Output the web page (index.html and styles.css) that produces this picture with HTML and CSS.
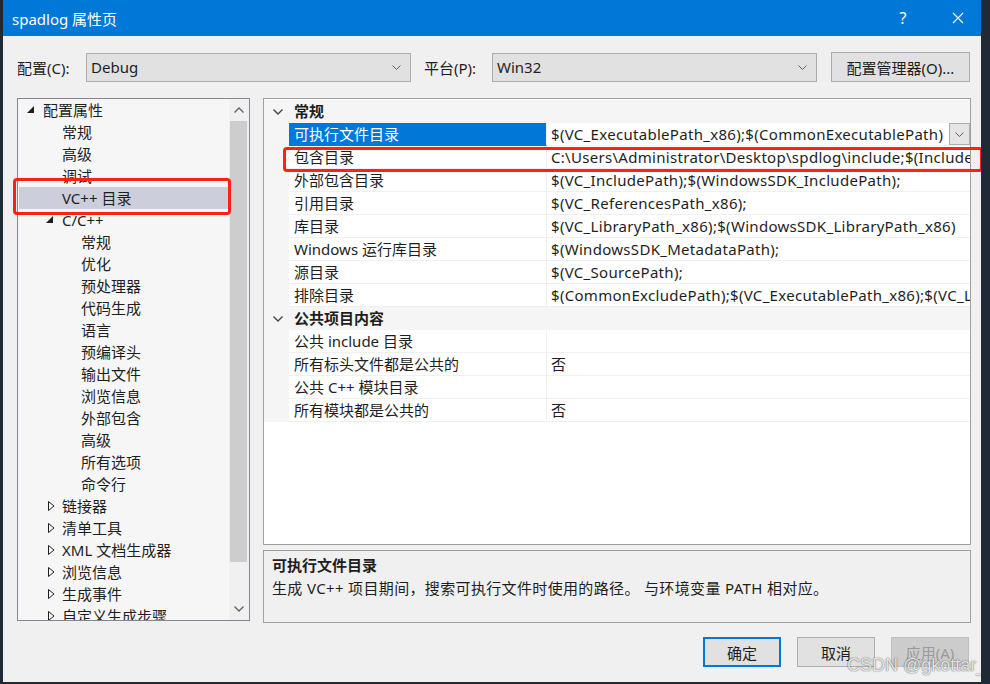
FILE: index.html
```html
<!DOCTYPE html>
<html lang="zh-CN">
<head>
    <meta charset="UTF-8">
    <title>spadlog 属性页</title>
    <link rel="stylesheet" href="styles.css">
</head>
<body>
    <div class="dialog">
        <div class="titlebar">
            <span class="title">spadlog 属性页</span>
            <span class="tb-help">?</span>
            <span class="tb-close">
                <svg width="12" height="12" viewBox="0 0 12 12"><path d="M1 1 L11 11 M11 1 L1 11" stroke="#fff" stroke-width="1.1" fill="none"/></svg>
            </span>
        </div>

        <div class="config-row">
            <span class="cfg-label">配置(C):</span>
            <div class="select">
                <span>Debug</span>
                <svg class="chev" width="9" height="5" viewBox="0 0 9 5"><path d="M0.5 0.5 L4.5 4.5 L8.5 0.5" stroke="#606060" fill="none"/></svg>
            </div>
            <span class="cfg-label plat">平台(P):</span>
            <div class="select">
                <span>Win32</span>
                <svg class="chev" width="9" height="5" viewBox="0 0 9 5"><path d="M0.5 0.5 L4.5 4.5 L8.5 0.5" stroke="#606060" fill="none"/></svg>
            </div>
            <button class="btn cfg-btn">配置管理器(O)...</button>
        </div>

        <div class="main">
            <div class="tree">
                <div class="tree-list">
                    <div class="node l0"><span class="exp"><svg width="8" height="8" viewBox="0 0 8 8"><path d="M7 0 L7 7 L0 7 Z" fill="#1e1e1e"/></svg></span>配置属性</div>
                    <div class="node l1"><span class="exp"></span>常规</div>
                    <div class="node l1"><span class="exp"></span>高级</div>
                    <div class="node l1"><span class="exp"></span>调试</div>
                    <div class="node l1 selected"><span class="exp"></span>VC++ 目录</div>
                    <div class="node l1"><span class="exp"><svg width="8" height="8" viewBox="0 0 8 8"><path d="M7 0 L7 7 L0 7 Z" fill="#1e1e1e"/></svg></span>C/C++</div>
                    <div class="node l2"><span class="exp"></span>常规</div>
                    <div class="node l2"><span class="exp"></span>优化</div>
                    <div class="node l2"><span class="exp"></span>预处理器</div>
                    <div class="node l2"><span class="exp"></span>代码生成</div>
                    <div class="node l2"><span class="exp"></span>语言</div>
                    <div class="node l2"><span class="exp"></span>预编译头</div>
                    <div class="node l2"><span class="exp"></span>输出文件</div>
                    <div class="node l2"><span class="exp"></span>浏览信息</div>
                    <div class="node l2"><span class="exp"></span>外部包含</div>
                    <div class="node l2"><span class="exp"></span>高级</div>
                    <div class="node l2"><span class="exp"></span>所有选项</div>
                    <div class="node l2"><span class="exp"></span>命令行</div>
                    <div class="node l1"><span class="exp"><svg class="closed" width="7" height="10" viewBox="0 0 7 10"><path d="M0.5 0.5 L6 5 L0.5 9.5 Z" fill="none" stroke="#1e1e1e"/></svg></span>链接器</div>
                    <div class="node l1"><span class="exp"><svg class="closed" width="7" height="10" viewBox="0 0 7 10"><path d="M0.5 0.5 L6 5 L0.5 9.5 Z" fill="none" stroke="#1e1e1e"/></svg></span>清单工具</div>
                    <div class="node l1"><span class="exp"><svg class="closed" width="7" height="10" viewBox="0 0 7 10"><path d="M0.5 0.5 L6 5 L0.5 9.5 Z" fill="none" stroke="#1e1e1e"/></svg></span>XML 文档生成器</div>
                    <div class="node l1"><span class="exp"><svg class="closed" width="7" height="10" viewBox="0 0 7 10"><path d="M0.5 0.5 L6 5 L0.5 9.5 Z" fill="none" stroke="#1e1e1e"/></svg></span>浏览信息</div>
                    <div class="node l1"><span class="exp"><svg class="closed" width="7" height="10" viewBox="0 0 7 10"><path d="M0.5 0.5 L6 5 L0.5 9.5 Z" fill="none" stroke="#1e1e1e"/></svg></span>生成事件</div>
                    <div class="node l1"><span class="exp"><svg class="closed" width="7" height="10" viewBox="0 0 7 10"><path d="M0.5 0.5 L6 5 L0.5 9.5 Z" fill="none" stroke="#1e1e1e"/></svg></span>自定义生成步骤</div>
                </div>
                <div class="scrollbar">
                    <div class="sb-arrow"><svg width="10" height="6" viewBox="0 0 10 6"><path d="M0.5 5.5 L5 1 L9.5 5.5" stroke="#606060" stroke-width="1.3" fill="none"/></svg></div>
                    <div class="sb-track"><div class="sb-thumb"></div></div>
                    <div class="sb-arrow"><svg width="10" height="6" viewBox="0 0 10 6"><path d="M0.5 0.5 L5 5 L9.5 0.5" stroke="#606060" stroke-width="1.3" fill="none"/></svg></div>
                </div>
            </div>

            <div class="right">
                <div class="grid">
                    <div class="cat"><span class="gut"><svg width="10" height="6" viewBox="0 0 10 6"><path d="M0.5 0.5 L5 5 L9.5 0.5" stroke="#444" stroke-width="1.4" fill="none"/></svg></span><span class="cat-name">常规</span></div>
                    <div class="prop active"><span class="gut"></span><span class="name">可执行文件目录</span><span class="val"><span class="val-text">$(VC_ExecutablePath_x86);$(CommonExecutablePath)</span><span class="val-btn"><svg width="9" height="5" viewBox="0 0 9 5"><path d="M0.5 0.5 L4.5 4.5 L8.5 0.5" stroke="#606060" fill="none"/></svg></span></span></div>
                    <div class="prop"><span class="gut"></span><span class="name">包含目录</span><span class="val"><span class="val-text">C:\Users\Administrator\Desktop\spdlog\include;$(IncludePath)</span></span></div>
                    <div class="prop"><span class="gut"></span><span class="name">外部包含目录</span><span class="val"><span class="val-text">$(VC_IncludePath);$(WindowsSDK_IncludePath);</span></span></div>
                    <div class="prop"><span class="gut"></span><span class="name">引用目录</span><span class="val"><span class="val-text">$(VC_ReferencesPath_x86);</span></span></div>
                    <div class="prop"><span class="gut"></span><span class="name">库目录</span><span class="val"><span class="val-text">$(VC_LibraryPath_x86);$(WindowsSDK_LibraryPath_x86)</span></span></div>
                    <div class="prop"><span class="gut"></span><span class="name">Windows 运行库目录</span><span class="val"><span class="val-text">$(WindowsSDK_MetadataPath);</span></span></div>
                    <div class="prop"><span class="gut"></span><span class="name">源目录</span><span class="val"><span class="val-text">$(VC_SourcePath);</span></span></div>
                    <div class="prop"><span class="gut"></span><span class="name">排除目录</span><span class="val"><span class="val-text">$(CommonExcludePath);$(VC_ExecutablePath_x86);$(VC_LibraryPath_x86)</span></span></div>
                    <div class="cat"><span class="gut"><svg width="10" height="6" viewBox="0 0 10 6"><path d="M0.5 0.5 L5 5 L9.5 0.5" stroke="#444" stroke-width="1.4" fill="none"/></svg></span><span class="cat-name">公共项目内容</span></div>
                    <div class="prop"><span class="gut"></span><span class="name">公共 include 目录</span><span class="val"><span class="val-text"></span></span></div>
                    <div class="prop"><span class="gut"></span><span class="name">所有标头文件都是公共的</span><span class="val"><span class="val-text">否</span></span></div>
                    <div class="prop"><span class="gut"></span><span class="name">公共 C++ 模块目录</span><span class="val"><span class="val-text"></span></span></div>
                    <div class="prop"><span class="gut"></span><span class="name">所有模块都是公共的</span><span class="val"><span class="val-text">否</span></span></div>
                </div>
                <div class="desc">
                    <div class="desc-title">可执行文件目录</div>
                    <div class="desc-text">生成 VC++ 项目期间，搜索可执行文件时使用的路径。 与环境变量 PATH 相对应。</div>
                </div>
            </div>
        </div>

        <div class="footer">
            <button class="btn default">确定</button>
            <button class="btn">取消</button>
            <button class="btn disabled">应用(A)</button>
        </div>

        <div class="mark mark-tree"></div>
        <div class="mark mark-grid"></div>
        <div class="watermark">CSDN @gkottar_</div>
    </div>
</body>
</html>
```

FILE: styles.css
```css
body {
    margin: 0;
    background-color: #1f2a36;
    font-family: "Noto Sans", "Noto Sans CJK SC", sans-serif;
    font-size: 15px;
    color: #1e1e1e;
}
.dialog {
    position: relative;
    width: 978px;
    height: 682px;
    margin-left: 3px;
    background-color: #f0f0f0;
    display: flex;
    flex-direction: column;
    overflow: hidden;
}
.titlebar {
    height: 36px;
    flex: none;
    background-color: #0078d7;
    color: #fff;
    display: flex;
    align-items: center;
    padding-left: 9px;
}
.title {
    font-size: 15px;
}
.tb-help {
    margin-left: auto;
    width: 30px;
    text-align: center;
    font-size: 16px;
    margin-right: 17px;
}
.tb-close {
    width: 46px;
    display: flex;
    justify-content: center;
}

.config-row {
    display: flex;
    align-items: center;
    height: 30px;
    margin-top: 16px;
    padding-left: 14px;
}
.cfg-label {
    width: 69px;
}
.cfg-label.plat {
    width: 68px;
    margin-left: 13px;
}
.select {
    width: 325px;
    height: 29px;
    box-sizing: border-box;
    border: 1px solid #adadad;
    background-color: #e1e1e1;
    display: flex;
    align-items: center;
    padding: 0 9px 0 4px;
}
.select .chev {
    margin-left: auto;
}
.btn {
    font-family: "Noto Sans", "Noto Sans CJK SC", sans-serif;
    font-size: 15px;
    color: #1e1e1e;
    background-color: #e1e1e1;
    border: 1px solid #adadad;
    height: 30px;
    width: 78px;
    padding: 0;
    box-sizing: border-box;
}
.cfg-btn {
    width: 139px;
    margin-left: 14px;
}

.main {
    display: flex;
    margin-top: 16px;
    padding-left: 14px;
    height: 525px;
}
.tree {
    width: 233px;
    height: 523px;
    box-sizing: border-box;
    border: 1px solid #828790;
    background-color: #f6f6f6;
    display: flex;
}
.tree-list {
    flex: 1;
    overflow: hidden;
}
.node {
    height: 22px;
    line-height: 22px;
    display: flex;
    align-items: center;
    margin: 0 1px;
    white-space: nowrap;
}
.node.l0 { padding-left: 6px; }
.node.l1 { padding-left: 25px; }
.node.l2 { padding-left: 44px; }
.node.selected {
    background-color: #cccedb;
}
.exp {
    width: 18px;
    height: 22px;
    display: flex;
    align-items: center;
    padding-left: 2px;
    box-sizing: border-box;
}
.exp .closed {
    margin-left: 2px;
}
.scrollbar {
    width: 20px;
    display: flex;
    flex-direction: column;
    background-color: #f0f0f0;
}
.sb-arrow {
    height: 22px;
    display: flex;
    align-items: center;
    justify-content: center;
}
.sb-track {
    flex: 1;
    display: flex;
    flex-direction: column;
}
.sb-thumb {
    height: 441px;
    margin: 0 2px 0 1px;
    background-color: #cdcdcd;
}

.right {
    margin-left: 13px;
    width: 708px;
    display: flex;
    flex-direction: column;
}
.grid {
    height: 447px;
    box-sizing: border-box;
    border: 1px solid #a0a0a0;
    background-color: #fff;
    padding-top: 1px;
    overflow: hidden;
}
.cat, .prop {
    display: flex;
    height: 23px;
    line-height: 22px;
    white-space: nowrap;
}
.cat {
    background-color: #f5f5f5;
}
.gut {
    width: 25px;
    flex: none;
    display: flex;
    align-items: center;
    justify-content: center;
    padding-left: 2px;
    box-sizing: border-box;
    background-color: #f5f5f5;
}
.cat-name {
    font-weight: bold;
    padding-left: 5px;
}
.name {
    width: 258px;
    flex: none;
    box-sizing: border-box;
    padding-left: 5px;
    border-right: 1px solid #f0f0f0;
    border-bottom: 1px solid #f0f0f0;
}
.prop.active .name {
    background-color: #0078d7;
    color: #fff;
    border-bottom-color: #0078d7;
}
.val {
    flex: 1;
    display: flex;
    min-width: 0;
    border-bottom: 1px solid #f0f0f0;
}
.val-text {
    flex: 1;
    overflow: hidden;
    padding-left: 4px;
    letter-spacing: 0.3px;
}
.val-btn {
    width: 21px;
    height: 22px;
    box-sizing: border-box;
    border: 1px solid #adadad;
    background-color: #e5e5e5;
    display: flex;
    align-items: center;
    justify-content: center;
}
.desc {
    margin-top: 5px;
    height: 73px;
    box-sizing: border-box;
    border: 1px solid #a0a0a0;
    background-color: #f0f0f0;
    padding: 3px 8px;
    line-height: 23px;
}
.desc-title {
    font-weight: bold;
}
.desc-text {
    letter-spacing: 0.35px;
}

.footer {
    display: flex;
    justify-content: flex-end;
    gap: 16px;
    margin-top: 14px;
    padding-right: 12px;
}
.btn.default {
    border: 2px solid #0078d7;
}
.btn.disabled {
    background-color: #cccccc;
    border-color: #bfbfbf;
    color: #9a9a9a;
}

.mark {
    position: absolute;
    border: 3px solid #ff2118;
    border-radius: 4px;
    box-sizing: border-box;
}
.mark-tree {
    left: 10px;
    top: 178px;
    width: 218px;
    height: 37px;
}
.mark-grid {
    left: 280px;
    top: 147px;
    width: 700px;
    height: 25px;
}
.watermark {
    position: absolute;
    left: 844px;
    top: 655px;
    font-family: "Liberation Sans", sans-serif;
    font-size: 18px;
    color: rgba(255, 255, 255, 0.85);
    text-shadow: 0 0 1px rgba(0, 0, 0, 0.6), 0 0 2px rgba(0, 0, 0, 0.3);
    white-space: nowrap;
}
```
